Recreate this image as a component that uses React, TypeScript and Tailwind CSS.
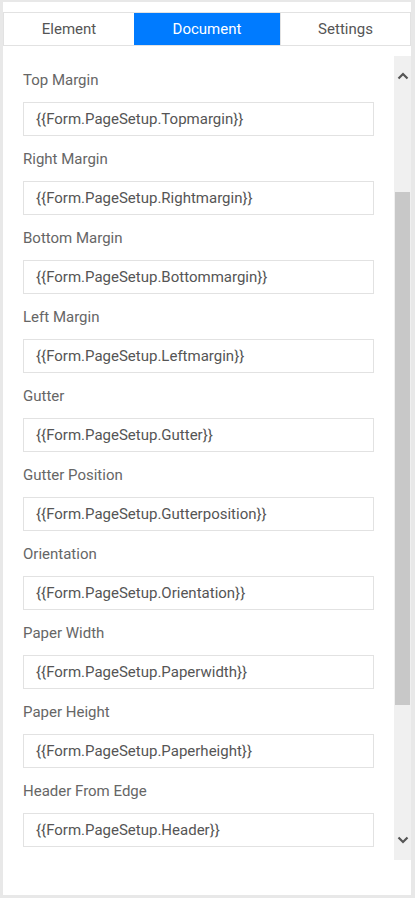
import React from 'react';

const fields = [
  { label: 'Top Margin', value: '{{Form.PageSetup.Topmargin}}' },
  { label: 'Right Margin', value: '{{Form.PageSetup.Rightmargin}}' },
  { label: 'Bottom Margin', value: '{{Form.PageSetup.Bottommargin}}' },
  { label: 'Left Margin', value: '{{Form.PageSetup.Leftmargin}}' },
  { label: 'Gutter', value: '{{Form.PageSetup.Gutter}}' },
  { label: 'Gutter Position', value: '{{Form.PageSetup.Gutterposition}}' },
  { label: 'Orientation', value: '{{Form.PageSetup.Orientation}}' },
  { label: 'Paper Width', value: '{{Form.PageSetup.Paperwidth}}' },
  { label: 'Paper Height', value: '{{Form.PageSetup.Paperheight}}' },
  { label: 'Header From Edge', value: '{{Form.PageSetup.Header}}' },
];

const tabs = ['Element', 'Document', 'Settings'];

const App: React.FC = () => {
  return (
    <div
      className="w-[415px] h-[898px] bg-[#e8e8e8] pt-[2px] pl-[3px] pr-[4px] pb-[3px]"
      style={{ fontFamily: 'Roboto, "Noto Sans", sans-serif' }}
    >
      <div className="bg-white h-full flex flex-col">
        {/* tabs */}
        <div className="mt-[10px] flex h-[34px] border border-[#e2e2e2] text-[15px]">
          {tabs.map((t) => (
            <div
              key={t}
              className={
                t === 'Document'
                  ? 'w-[146px] flex items-center justify-center bg-[#007bff] text-white'
                  : t === 'Element'
                  ? 'w-[130px] flex items-center justify-center text-[#555]'
                  : 'flex-1 flex items-center justify-center text-[#555] border-l border-[#e2e2e2]'
              }
            >
              {t}
            </div>
          ))}
        </div>

        <div className="flex flex-1 min-h-0">
          {/* form */}
          <div className="flex-1 overflow-hidden pl-[20px] pr-[20px] pt-[23px] h-[814px]">
            {fields.map((f) => (
              <div key={f.label} className="mb-[12px]">
                <div className="h-[22px] leading-[22px] text-[15px] text-[#666]">{f.label}</div>
                <div className="mt-[11px] h-[34px] border border-[#e2e2e2] pl-[12px] flex items-center text-[15px] text-[#555]">
                  {f.value}
                </div>
              </div>
            ))}
          </div>

          {/* scrollbar */}
          <div className="w-[17px] mt-[10px] h-[804px] bg-[#f0f0f0] flex flex-col items-center">
            <div className="h-[40px] flex items-center justify-center">
              <svg width="12" height="8" viewBox="0 0 12 8">
                <path d="M1.5 6.5 L6 2 L10.5 6.5" fill="none" stroke="#555" strokeWidth="2.2" />
              </svg>
            </div>
            <div className="mt-[96px] w-[15px] h-[513px] bg-[#c8c8c8]" />
            <div className="flex-1" />
            <div className="h-[40px] flex items-center justify-center">
              <svg width="12" height="8" viewBox="0 0 12 8">
                <path d="M1.5 1.5 L6 6 L10.5 1.5" fill="none" stroke="#555" strokeWidth="2.2" />
              </svg>
            </div>
          </div>
        </div>
      </div>
    </div>
  );
};

export default App;
